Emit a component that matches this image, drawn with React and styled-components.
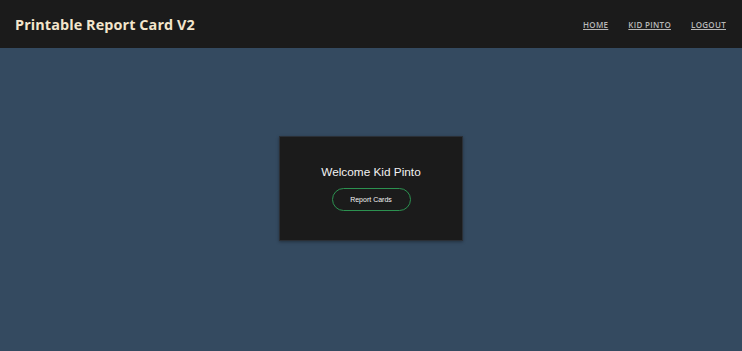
import React from "react";
import styled, { createGlobalStyle } from "styled-components";

const GlobalStyle = createGlobalStyle`
  html, body {
    margin: 0;
    padding: 0;
    height: 100%;
  }
  body {
    background: #344a60;
    font-family: "Liberation Sans", Arial, sans-serif;
  }
  #root {
    min-height: 100%;
  }
`;

const Page = styled.div`
  min-height: 351px;
  display: flex;
  flex-direction: column;
  background: #344a60;
`;

const TopBar = styled.header`
  height: 48px;
  background: #1b1b1b;
  display: flex;
  align-items: center;
  justify-content: space-between;
  padding: 0 16px 0 15px;
  box-sizing: border-box;
`;

const Brand = styled.h1`
  margin: 0;
  font-family: "Open Sans", sans-serif;
  font-weight: 700;
  font-size: 14.4px;
  color: #f3e6cc;
  letter-spacing: 0.1px;
`;

const Nav = styled.nav`
  display: flex;
  gap: 20px;
`;

const NavLink = styled.a`
  font-family: "Open Sans", sans-serif;
  font-size: 8px;
  font-weight: 600;
  letter-spacing: 0.3px;
  text-transform: uppercase;
  color: #b8b8b8;
  text-decoration: underline;
  cursor: pointer;
`;

const Main = styled.main`
  flex: 1;
  display: flex;
  justify-content: center;
  padding-top: 88px;
`;

const Card = styled.section`
  width: 184px;
  height: 105px;
  box-sizing: border-box;
  background: #1b1b1b;
  border: 1px solid #2a2f36;
  box-shadow: 0 1px 3px rgba(0, 0, 0, 0.35);
  display: flex;
  flex-direction: column;
  align-items: center;
  padding-top: 28px;
`;

const Welcome = styled.h2`
  margin: 0 0 9px;
  font-weight: 400;
  font-size: 11.8px;
  color: #f2f2f2;
`;

const Button = styled.button`
  width: 79px;
  height: 23px;
  box-sizing: border-box;
  border: 1px solid #2c9150;
  border-radius: 12px;
  background: transparent;
  color: #f2f2f2;
  font-family: "Liberation Sans", Arial, sans-serif;
  font-size: 7px;
  cursor: pointer;
`;

export default function App() {
  return (
    <>
      <GlobalStyle />
      <Page>
        <TopBar>
          <Brand>Printable Report Card V2</Brand>
          <Nav>
            <NavLink>Home</NavLink>
            <NavLink>Kid Pinto</NavLink>
            <NavLink>Logout</NavLink>
          </Nav>
        </TopBar>
        <Main>
          <Card>
            <Welcome>Welcome Kid Pinto</Welcome>
            <Button>Report Cards</Button>
          </Card>
        </Main>
      </Page>
    </>
  );
}
